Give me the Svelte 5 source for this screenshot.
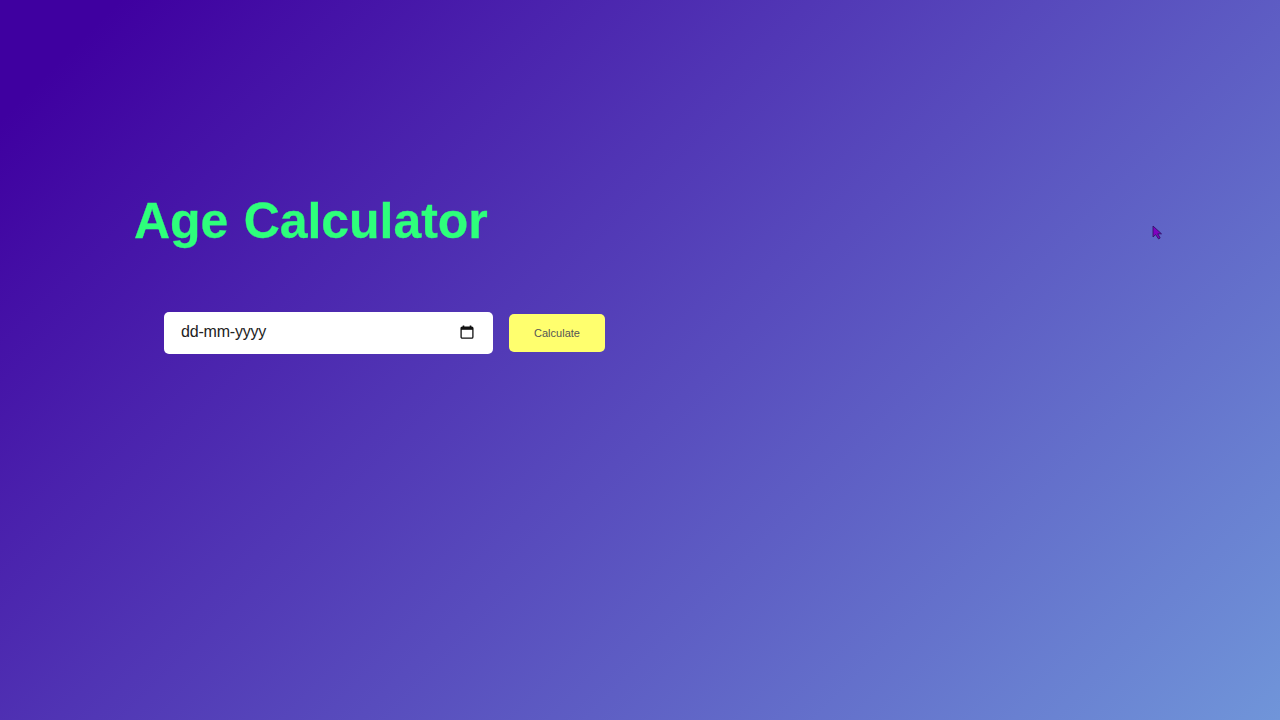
<script>
  let dob = $state('');
</script>

<main class="page">
  <h1 class="title">Age Calculator</h1>
  <div class="form">
    <label class="date">
      <span class="value">{dob || 'dd-mm-yyyy'}</span>
      <svg class="cal" width="14" height="14" viewBox="0 0 14 14" aria-hidden="true">
        <path d="M3.5 0.5v1.500M10.500 0.5v1.500" stroke="#111" stroke-width="1.6" fill="none"/>
        <rect x="1.1" y="2.1" width="11.8" height="11" rx="1.2" fill="none" stroke="#111" stroke-width="1.3"/>
        <rect x="1" y="2" width="12" height="2.8" fill="#111"/>
      </svg>
    </label>
    <button class="btn" type="button">Calculate</button>
  </div>
  <svg class="cursor" width="10" height="15" viewBox="0 0 10 15" aria-hidden="true">
    <path d="M1 1v11l2.600-2.400 3 4.400 1.600-1-2.400-4.200H9.500z" fill="#8000c0" stroke="#2c1060" stroke-width="0.8"/>
  </svg>
</main>

<style>
  :global(body) {
    margin: 0;
    font-family: "Liberation Sans", Arial, sans-serif;
  }
  .page {
    position: relative;
    box-sizing: border-box;
    height: 720px;
    overflow: hidden;
    padding: 193px 0 0 134px;
    background: linear-gradient(135deg, #3f00a0 6%, #7095d9 100%);
  }
  .title {
    margin: 0;
    font-size: 50px;
    line-height: 57px;
    font-weight: 700;
    word-spacing: 1.5px;
    letter-spacing: -0.05px;
    color: #2eff7b;
    -webkit-text-stroke: 0.3px #2eff7b;
  }
  .form {
    display: flex;
    align-items: center;
    gap: 16px;
    margin: 62px 0 0 30px;
  }
  .date {
    box-sizing: border-box;
    width: 329px;
    height: 42px;
    padding: 0 19.5px 2px 17px;
    display: flex;
    align-items: center;
    justify-content: space-between;
    background: #fff;
    border-radius: 5px;
    font-size: 16px;
    letter-spacing: -0.2px;
    color: #222;
  }
  .cal {
    display: block;
  }
  .btn {
    width: 96px;
    height: 38px;
    padding: 0 0 1px;
    border: 0;
    border-radius: 5px;
    background: #ffff6e;
    color: #555;
    font: 11px "Liberation Sans", Arial, sans-serif;
  }
  .cursor {
    position: absolute;
    left: 1152px;
    top: 225px;
  }
</style>
